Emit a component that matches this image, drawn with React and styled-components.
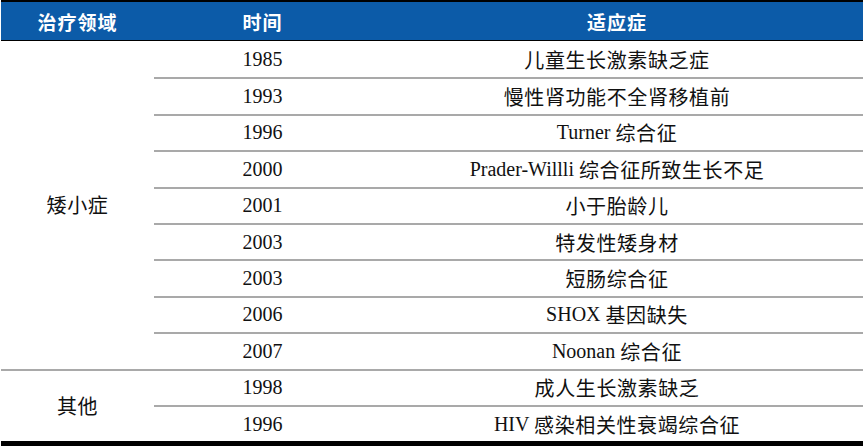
import React from "react";
import styled, { createGlobalStyle } from "styled-components";

const Global = createGlobalStyle`
  html, body { margin: 0; padding: 0; background: #fff; }
  body { font-family: "Liberation Serif", "Noto Sans CJK SC", serif; }
`;

const Table = styled.div`
  margin-left: 1px;
  width: 862px;
  display: grid;
  grid-template-columns: 153px 217px 1fr;
  grid-template-rows: 41px repeat(11, 36.4px);
  border-bottom: 5px solid #000;
`;

const Head = styled.div`
  background: #0c5ba8;
  color: #fff;
  font-family: "Noto Sans CJK SC", sans-serif;
  font-weight: 700;
  font-size: 19px;
  letter-spacing: 1px;
  display: flex;
  align-items: center;
  justify-content: center;
  border-top: 2px solid #000;
  border-bottom: 1px solid #000;
  box-sizing: border-box;
  padding-top: 1px;
`;

const Cell = styled.div`
  display: flex;
  align-items: center;
  justify-content: center;
  box-sizing: border-box;
  font-size: 20px;
  color: #111;
  white-space: pre;
  border-top: ${(p) => (p.$line ? "2px solid #a9a9a9" : "none")};
  grid-row: ${(p) => p.$row || "auto"};
  grid-column: ${(p) => p.$col || "auto"};
`;

const Han = styled.span`
  letter-spacing: 0.6px;
`;

const Latin = styled.span`
  letter-spacing: 0;
`;

function Mixed({ text }) {
  const parts = text.split(/([A-Za-z0-9\-]+ ?)/).filter(Boolean);
  return parts.map((p, i) =>
    /[A-Za-z0-9]/.test(p) ? <Latin key={i}>{p}</Latin> : <Han key={i}>{p}</Han>
  );
}

const groups = [
  {
    name: "矮小症",
    rows: [
      ["1985", "儿童生长激素缺乏症"],
      ["1993", "慢性肾功能不全肾移植前"],
      ["1996", "Turner 综合征"],
      ["2000", "Prader-Willli 综合征所致生长不足"],
      ["2001", "小于胎龄儿"],
      ["2003", "特发性矮身材"],
      ["2003", "短肠综合征"],
      ["2006", "SHOX 基因缺失"],
      ["2007", "Noonan 综合征"],
    ],
  },
  {
    name: "其他",
    rows: [
      ["1998", "成人生长激素缺乏"],
      ["1996", "HIV 感染相关性衰竭综合征"],
    ],
  },
];

export default function App() {
  let r = 2;
  const cells = [];
  groups.forEach((g, gi) => {
    const start = r;
    cells.push(
      <Cell
        key={"g" + gi}
        $line={gi > 0}
        $col="1"
        $row={`${start} / span ${g.rows.length}`}
      >
        <Han>{g.name}</Han>
      </Cell>
    );
    g.rows.forEach((row, i) => {
      cells.push(
        <Cell key={`y${gi}-${i}`} $col="2" $row={`${r}`} $line={gi > 0 || i > 0}>
          {row[0]}
        </Cell>,
        <Cell key={`t${gi}-${i}`} $col="3" $row={`${r}`} $line={gi > 0 || i > 0}>
          <Mixed text={row[1]} />
        </Cell>
      );
      r++;
    });
  });

  return (
    <>
      <Global />
      <Table>
        <Head>治疗领域</Head>
        <Head>时间</Head>
        <Head>适应症</Head>
        {cells}
      </Table>
    </>
  );
}
